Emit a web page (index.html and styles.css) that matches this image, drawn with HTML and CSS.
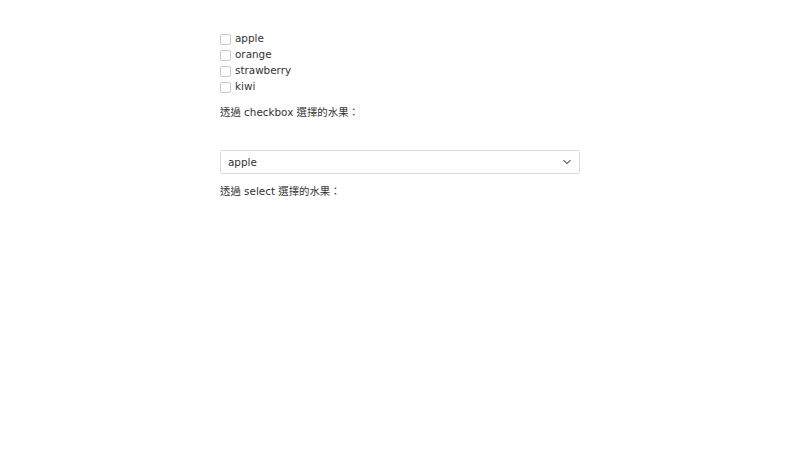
FILE: index.html
```html
<!DOCTYPE html>
<html lang="zh-Hant">
<head>
<meta charset="utf-8">
<link rel="stylesheet" href="styles.css">
</head>
<body>
<div class="wrap">
  <div class="checks">
    <label class="check"><span class="box"></span>apple</label>
    <label class="check"><span class="box"></span>orange</label>
    <label class="check"><span class="box"></span>strawberry</label>
    <label class="check"><span class="box"></span>kiwi</label>
  </div>
  <p class="result">透過 checkbox 選擇的水果：</p>
  <div class="select">
    <span>apple</span>
    <svg class="chev" width="10" height="6" viewBox="0 0 10 6"><path d="M1.5 1.2 L5 4.6 L8.5 1.2" fill="none" stroke="#555" stroke-width="1.1"/></svg>
  </div>
  <p class="result">透過 select 選擇的水果：</p>
</div>
</body>
</html>
```
FILE: styles.css
```css
html, body { margin: 0; padding: 0; background: #fff; }
body {
  font-family: "DejaVu Sans", "Noto Sans CJK TC", sans-serif;
  font-size: 10.4px;
  color: #333;
}
.wrap {
  width: 360px;
  margin: 0 auto;
  padding-top: 30px;
  display: flex;
  flex-direction: column;
}
.checks { display: flex; flex-direction: column; }
.check {
  display: flex;
  align-items: center;
  height: 16px;
  line-height: 16px;
}
.box {
  width: 9px;
  height: 9px;
  border: 1px solid #c8c8c8;
  border-radius: 2px;
  margin-right: 4px;
  margin-top: 3px;
  box-sizing: content-box;
}
.result {
  margin: 10px 0 0;
  line-height: 16px;
}
.select {
  margin-top: 30px;
  height: 22px;
  border: 1px solid #d8d8d8;
  border-radius: 3px;
  display: flex;
  align-items: center;
  justify-content: space-between;
  padding: 0 7px 0 7px;
}
.select + .result { margin-top: 9px; }
```
